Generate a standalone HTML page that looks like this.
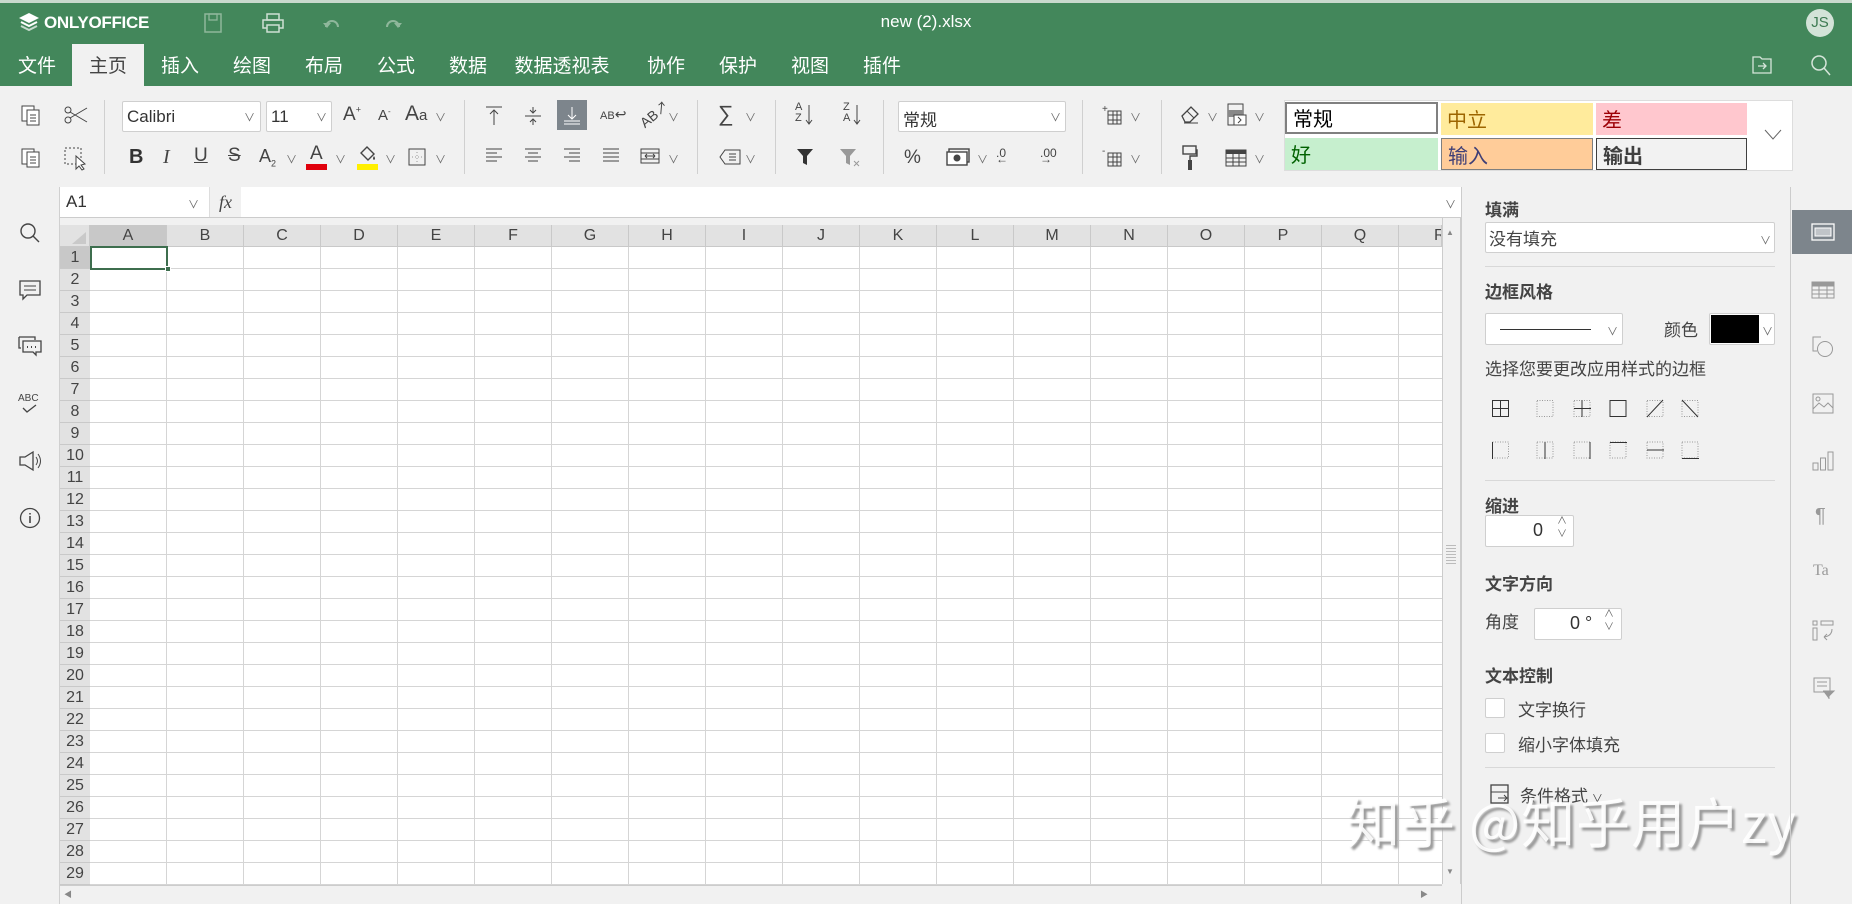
<!DOCTYPE html>
<html><head><meta charset="utf-8"><style>
*{margin:0;padding:0;box-sizing:border-box}
body{width:1852px;height:904px;overflow:hidden;background:#f1f1f1;font-family:"Liberation Sans","Noto Sans CJK SC",sans-serif;color:#444;position:relative}
.a{position:absolute}
.hdr{left:0;top:0;width:1852px;height:86px;background:#43875b;border-top:3px solid #c9d9cd}
.tab{position:absolute;top:44px;height:42px;line-height:42px;color:#fff;font-size:19px;font-family:"Noto Sans CJK SC",sans-serif;text-align:center;white-space:nowrap}
.ic{position:absolute;color:#444}
.sep{position:absolute;top:100px;width:1px;height:74px;background:#d0d0d0}
.box{position:absolute;background:#fff;border:1px solid #cfcfcf;border-radius:2px}
.dd{position:absolute;font-size:11px;color:#666}
.t{position:absolute;font-size:17px;color:#444;font-family:"Noto Sans CJK SC",sans-serif}
.b{font-weight:bold}
.ch{position:absolute;top:225px;height:22px;width:77px;line-height:22px;text-align:center;font-size:16px;color:#444;border-right:1px solid #c9c9c9;background:#e2e2e2;border-bottom:1px solid #c9c9c9}
.rh{position:absolute;left:60px;width:30px;height:22px;line-height:22px;text-align:center;font-size:16px;color:#444;background:#e2e2e2;border-bottom:1px solid #c9c9c9}
.st{position:absolute;height:32px;line-height:32px;padding-left:6px;font-size:20px;font-family:"Noto Sans CJK SC",sans-serif}
svg{position:absolute;overflow:visible}
</style></head><body>
<div class="a hdr"></div>
<svg style="left:18px;top:12px" width="22" height="22" viewBox="0 0 22 22"><path d="M11 1 L21 6 L11 11 L1 6Z" fill="#fff"/><path d="M3 10 L11 14 L19 10" stroke="#fff" stroke-width="2" fill="none"/><path d="M3 14 L11 18 L19 14" stroke="#fff" stroke-width="2" fill="none" opacity=".7"/></svg>
<div class="a" style="left:44px;top:13px;color:#fff;font-weight:bold;font-size:17px;letter-spacing:-.3px">ONLYOFFICE</div>
<svg style="left:204px;top:13px" width="18" height="20"><rect x="1" y="1" width="16" height="18" fill="none" stroke="#8fb79b" stroke-width="1.5"/><rect x="5" y="1" width="8" height="6" fill="none" stroke="#8fb79b" stroke-width="1.3"/></svg>
<svg style="left:262px;top:13px" width="22" height="20"><rect x="5" y="1" width="12" height="6" fill="none" stroke="#cfe0d4" stroke-width="1.5"/><rect x="1" y="7" width="20" height="8" fill="none" stroke="#cfe0d4" stroke-width="1.5"/><rect x="5" y="12" width="12" height="7" fill="#43875b" stroke="#cfe0d4" stroke-width="1.5"/></svg>
<svg style="left:323px;top:16px" width="18" height="14"><path d="M3 11 A6 6 0 1 1 15 11" stroke="#8fb79b" stroke-width="2" fill="none"/><path d="M0 7 L4 12 L8 7Z" fill="#8fb79b"/></svg>
<svg style="left:384px;top:16px" width="18" height="14"><path d="M3 11 A6 6 0 1 1 15 11" stroke="#8fb79b" stroke-width="2" fill="none"/><path d="M10 7 L14 12 L18 7Z" fill="#8fb79b"/></svg>
<div class="a" style="left:0;width:1852px;top:12px;text-align:center;color:#fff;font-size:17px">new (2).xlsx</div>
<div class="a" style="left:1806px;top:9px;width:28px;height:28px;border-radius:50%;background:#d3e3d8;color:#3d7a52;font-size:15px;text-align:center;line-height:28px">JS</div>
<div class="tab" style="left:14px;width:46px">文件</div>
<div class="tab" style="left:72px;width:72px;background:#f1f1f1;color:#444">主页</div>
<div class="tab" style="left:156px;width:48px">插入</div>
<div class="tab" style="left:228px;width:48px">绘图</div>
<div class="tab" style="left:300px;width:48px">布局</div>
<div class="tab" style="left:372px;width:48px">公式</div>
<div class="tab" style="left:444px;width:48px">数据</div>
<div class="tab" style="left:508px;width:108px">数据透视表</div>
<div class="tab" style="left:642px;width:48px">协作</div>
<div class="tab" style="left:714px;width:48px">保护</div>
<div class="tab" style="left:786px;width:48px">视图</div>
<div class="tab" style="left:858px;width:48px">插件</div>
<svg style="left:1752px;top:56px" width="20" height="18"><path d="M1 1 H8 L10 3 H19 V17 H1Z" fill="none" stroke="#d6e5da" stroke-width="1.3"/><path d="M6 10 H14 M11 7 L14 10 L11 13" stroke="#d6e5da" stroke-width="1.3" fill="none"/></svg>
<svg style="left:1811px;top:55px" width="20" height="22"><circle cx="8" cy="8" r="7" fill="none" stroke="#d6e5da" stroke-width="1.5"/><path d="M13 13 L19 20" stroke="#d6e5da" stroke-width="1.5"/></svg>

<svg style="left:21px;top:105px" width="20" height="22"><rect x="1" y="1" width="12" height="15" fill="#fff" stroke="#444"/><rect x="6" y="5" width="12" height="15" fill="#fff" stroke="#444"/><path d="M9 10h6M9 13h6M9 16h6" stroke="#444"/></svg>
<svg style="left:64px;top:106px" width="24" height="18"><circle cx="4" cy="4" r="3" fill="none" stroke="#444"/><circle cx="4" cy="14" r="3" fill="none" stroke="#444"/><path d="M6 6 L23 16 M6 12 L23 2" stroke="#444"/></svg>
<svg style="left:21px;top:146px" width="20" height="22"><rect x="1" y="3" width="12" height="15" fill="#fff" stroke="#444"/><rect x="6" y="6" width="12" height="15" fill="#fff" stroke="#444"/><path d="M9 11h6M9 14h6M9 17h6" stroke="#444"/></svg>
<svg style="left:64px;top:147px" width="24" height="24"><rect x="1" y="1" width="16" height="16" fill="none" stroke="#444" stroke-dasharray="2 2"/><path d="M12 9 L12 22 L15 19 L18 23 L20 22 L17 18 L21 17Z" fill="#fff" stroke="#444"/></svg>
<div class="sep" style="left:104px"></div>
<div class="box" style="left:122px;top:101px;width:139px;height:31px"></div>
<div class="a" style="left:127px;top:107px;font-size:17px;color:#333">Calibri</div>
<div class="dd" style="left:244px;top:109px">&#8744;</div>
<div class="box" style="left:266px;top:101px;width:66px;height:31px"></div>
<div class="a" style="left:271px;top:107px;font-size:17px;color:#333">11</div>
<div class="dd" style="left:316px;top:109px">&#8744;</div>
<div class="a" style="left:343px;top:104px;font-size:19px">A<sup style="font-size:9px">+</sup></div>
<div class="a" style="left:378px;top:107px;font-size:15px">A<sup style="font-size:8px">-</sup></div>
<div class="a" style="left:405px;top:102px;font-size:21px">A<span style="font-size:15px">a</span></div>
<div class="dd" style="left:435px;top:109px">&#8744;</div>
<div class="a b" style="left:129px;top:146px;font-size:20px;color:#333">B</div>
<div class="a" style="left:163px;top:146px;font-size:20px;font-style:italic;font-family:'Liberation Serif'">I</div>
<div class="a" style="left:194px;top:145px;font-size:19px;text-decoration:underline">U</div>
<div class="a" style="left:228px;top:145px;font-size:19px;text-decoration:line-through">S</div>
<div class="a" style="left:259px;top:146px;font-size:18px">A<sub style="font-size:9px">2</sub></div>
<div class="dd" style="left:286px;top:151px">&#8744;</div>
<div class="a" style="left:310px;top:143px;font-size:19px">A</div>
<div class="a" style="left:306px;top:164px;width:21px;height:6px;background:#e0000c"></div>
<div class="dd" style="left:335px;top:151px">&#8744;</div>
<svg style="left:358px;top:145px" width="20" height="18"><path d="M3 8 L9 2 L16 9 L10 15Z" fill="none" stroke="#444" stroke-width="1.4"/><path d="M16 11 Q18 14 16 15 Q14 14 16 11" fill="#444"/></svg>
<div class="a" style="left:357px;top:164px;width:21px;height:6px;background:#ffef00"></div>
<div class="dd" style="left:385px;top:151px">&#8744;</div>
<svg style="left:408px;top:148px" width="18" height="18"><rect x="1" y="1" width="16" height="16" fill="none" stroke="#444"/><path d="M9 1v16M1 9h16" stroke="#999" stroke-dasharray="1 2"/></svg>
<div class="dd" style="left:435px;top:151px">&#8744;</div>
<div class="sep" style="left:464px"></div>
<svg style="left:485px;top:106px" width="18" height="20"><path d="M1 1h16M9 4v15M5 8l4-4 4 4" stroke="#444" fill="none"/></svg>
<svg style="left:524px;top:106px" width="18" height="20"><path d="M1 10h16M9 1v6M9 13v6M6 4l3 3 3-3M6 16l3-3 3 3" stroke="#444" fill="none"/></svg>
<div class="a" style="left:557px;top:100px;width:30px;height:30px;background:#7d858c"></div>
<svg style="left:563px;top:106px" width="18" height="20"><path d="M1 18h16M1 15h16M9 1v12M5 9l4 4 4-4" stroke="#fff" fill="none"/></svg>
<div class="a" style="left:600px;top:106px;font-size:11px">AB<span style="font-size:14px">↩</span></div>
<div class="a" style="left:638px;top:104px;font-size:14px;transform:rotate(-40deg)">AB↗</div>
<div class="dd" style="left:668px;top:109px">&#8744;</div>
<svg style="left:485px;top:148px" width="18" height="16"><path d="M1 1h16M1 5h11M1 9h16M1 13h11" stroke="#444"/></svg>
<svg style="left:524px;top:148px" width="18" height="16"><path d="M1 1h16M4 5h10M1 9h16M4 13h10" stroke="#444"/></svg>
<svg style="left:563px;top:148px" width="18" height="16"><path d="M1 1h16M6 5h11M1 9h16M6 13h11" stroke="#444"/></svg>
<svg style="left:602px;top:148px" width="18" height="16"><path d="M1 1h16M1 5h16M1 9h16M1 13h16" stroke="#444"/></svg>
<svg style="left:640px;top:148px" width="20" height="16"><rect x="1" y="1" width="18" height="14" fill="none" stroke="#444"/><path d="M1 5h18M1 11h18M5 8h10M5 8l2-2M5 8l2 2M15 8l-2-2M15 8l-2 2" stroke="#444" fill="none"/></svg>
<div class="dd" style="left:668px;top:151px">&#8744;</div>
<div class="sep" style="left:697px"></div>
<div class="a" style="left:718px;top:101px;font-size:22px">∑</div>
<div class="dd" style="left:745px;top:109px">&#8744;</div>
<svg style="left:719px;top:149px" width="22" height="16"><path d="M6 1h15v14H6L1 8Z" fill="none" stroke="#444"/><path d="M10 5h7M10 8h7M10 11h7" stroke="#444"/></svg>
<div class="dd" style="left:745px;top:151px">&#8744;</div>
<div class="sep" style="left:775px"></div>
<div class="a" style="left:795px;top:102px;font-size:11px;line-height:11px">A<br>Z</div>
<svg style="left:805px;top:104px" width="8" height="22"><path d="M4 1v19M1 16l3 4 3-4" stroke="#444" fill="none"/></svg>
<div class="a" style="left:843px;top:102px;font-size:11px;line-height:11px">Z<br>A</div>
<svg style="left:853px;top:104px" width="8" height="22"><path d="M4 1v19M1 16l3 4 3-4" stroke="#444" fill="none"/></svg>
<svg style="left:797px;top:149px" width="16" height="16"><path d="M0 0h16L10 7v9L6 14V7Z" fill="#333"/></svg>
<svg style="left:840px;top:149px" width="20" height="18"><path d="M0 0h16L10 7v9L6 14V7Z" fill="#999"/><path d="M14 12l5 5M19 12l-5 5" stroke="#999"/></svg>
<div class="sep" style="left:883px"></div>
<div class="box" style="left:898px;top:101px;width:168px;height:31px"></div>
<div class="a" style="left:903px;top:106px;font-size:17px;font-family:'Noto Sans CJK SC';color:#333">常规</div>
<div class="dd" style="left:1050px;top:109px">&#8744;</div>
<div class="a" style="left:904px;top:147px;font-size:19px">%</div>
<svg style="left:946px;top:148px" width="24" height="18"><rect x="3" y="1" width="20" height="13" fill="none" stroke="#444" stroke-width="1.4"/><rect x="1" y="4" width="20" height="13" fill="#fff" stroke="#444" stroke-width="1.4"/><circle cx="11" cy="10" r="3.5" fill="#444"/></svg>
<div class="dd" style="left:977px;top:151px">&#8744;</div>
<div class="a" style="left:996px;top:146px;font-size:12px">.0<br><span style="position:relative;top:-8px">←</span></div>
<div class="a" style="left:1040px;top:146px;font-size:12px">.00<br><span style="position:relative;top:-8px">→</span></div>
<div class="sep" style="left:1082px"></div>
<svg style="left:1102px;top:104px" width="22" height="22"><text x="0" y="8" font-size="10" fill="#444">+</text><rect x="6" y="7" width="13" height="13" fill="none" stroke="#444"/><path d="M6 11h13M6 16h13M11 7v13M15 7v13" stroke="#444"/></svg>
<div class="dd" style="left:1130px;top:109px">&#8744;</div>
<svg style="left:1102px;top:146px" width="22" height="22"><text x="0" y="8" font-size="10" fill="#444">-</text><rect x="6" y="7" width="13" height="13" fill="none" stroke="#444"/><path d="M6 11h13M6 16h13M11 7v13M15 7v13" stroke="#444"/></svg>
<div class="dd" style="left:1130px;top:151px">&#8744;</div>
<div class="sep" style="left:1161px"></div>
<svg style="left:1180px;top:104px" width="20" height="20"><path d="M2 12 L11 3 L18 10 L10 18 H5Z" fill="none" stroke="#444" stroke-width="1.3"/><path d="M7 7l7 7M4 19h14" stroke="#444"/></svg>
<div class="dd" style="left:1207px;top:109px">&#8744;</div>
<svg style="left:1227px;top:103px" width="20" height="24"><rect x="1" y="1" width="15" height="21" fill="none" stroke="#444"/><rect x="1" y="7" width="15" height="7" fill="#888"/><rect x="7" y="12" width="12" height="10" fill="#fff" stroke="#444"/><path d="M11 14l3 3-3 3" stroke="#444" fill="none"/></svg>
<div class="dd" style="left:1254px;top:109px">&#8744;</div>
<svg style="left:1182px;top:145px" width="16" height="26"><rect x="1" y="1" width="13" height="8" fill="none" stroke="#444" stroke-width="1.4"/><path d="M14 5h1v6H8v14" stroke="#444" stroke-width="1.4" fill="none"/><rect x="6" y="15" width="4" height="10" fill="#444"/></svg>
<svg style="left:1225px;top:149px" width="22" height="18"><rect x="1" y="1" width="20" height="16" fill="none" stroke="#444"/><rect x="1" y="1" width="20" height="4" fill="#444"/><path d="M1 9h20M1 13h20M8 5v12M14 5v12" stroke="#444"/></svg>
<div class="dd" style="left:1254px;top:151px">&#8744;</div>
<div class="a" style="left:1284px;top:100px;width:509px;height:71px;background:#fff;border:1px solid #ddd"></div>
<div class="st" style="left:1285px;top:102px;width:153px;border:2px solid #808080;background:#fff;color:#000;line-height:28px">常规</div>
<div class="st" style="left:1441px;top:103px;width:152px;background:#ffeb9c;color:#9c6500">中立</div>
<div class="st" style="left:1596px;top:103px;width:151px;background:#ffc7ce;color:#9c0006">差</div>
<div class="st" style="left:1285px;top:138px;width:153px;background:#c6efce;color:#006100">好</div>
<div class="st" style="left:1441px;top:138px;width:152px;background:#ffcc99;color:#3f3f76;border:1px solid #7f7f7f">输入</div>
<div class="st" style="left:1596px;top:138px;width:151px;background:#f2f2f2;color:#3f3f3f;border:1px solid #3f3f3f;font-weight:bold">输出</div>
<svg style="left:1764px;top:129px" width="18" height="12"><path d="M1 1l8 9 8-9" stroke="#666" fill="none"/></svg>

<div class="a" style="left:59px;top:187px;width:1px;height:717px;background:#d0d0d0"></div>
<svg style="left:19px;top:222px" width="22" height="22"><circle cx="9" cy="9" r="7" fill="none" stroke="#444" stroke-width="1.4"/><path d="M14 14l6 6" stroke="#444" stroke-width="1.4"/></svg>
<svg style="left:19px;top:280px" width="22" height="22"><path d="M1 1h20v14H8l-4 4v-4H1Z" fill="none" stroke="#444" stroke-width="1.3"/><path d="M5 6h12M5 10h12" stroke="#444"/></svg>
<svg style="left:18px;top:336px" width="24" height="20"><path d="M1 1h16v3" fill="none" stroke="#444" stroke-width="1.3"/><path d="M1 1v11h2" stroke="#444" fill="none" stroke-width="1.3"/><path d="M5 5h18v11h-5v3l-3-3H5Z" fill="none" stroke="#444" stroke-width="1.3"/><path d="M9 11h1M13 11h1M17 11h1" stroke="#444" stroke-width="2"/></svg>
<div class="a" style="left:18px;top:393px;font-size:10px">ABC</div>
<svg style="left:22px;top:404px" width="16" height="10"><path d="M1 4l4 4 9-7" stroke="#444" fill="none" stroke-width="1.3"/></svg>
<svg style="left:18px;top:450px" width="24" height="22"><path d="M2 7h5l8-5v18l-8-5H2Z" fill="none" stroke="#444" stroke-width="1.3"/><path d="M18 7q3 4 0 8M20 4q5 7 0 14" stroke="#444" fill="none"/></svg>
<svg style="left:19px;top:507px" width="22" height="22"><circle cx="11" cy="11" r="9.5" fill="none" stroke="#444" stroke-width="1.3"/><path d="M11 9v7M11 6v1.5" stroke="#444" stroke-width="1.6"/></svg>

<div class="a" style="left:60px;top:187px;width:1401px;height:31px;background:#fff;border-bottom:1px solid #ccc"></div>
<div class="a" style="left:66px;top:192px;font-size:17px;color:#333">A1</div>
<div class="dd" style="left:188px;top:196px">&#8744;</div>
<div class="a" style="left:209px;top:187px;width:32px;height:30px;background:#f1f1f1;border-left:1px solid #ddd;text-align:center;font-family:'Liberation Serif';font-style:italic;font-size:18px;line-height:30px">fx</div>
<div class="dd" style="left:1445px;top:196px">&#8744;</div>
<div class="a" style="left:60px;top:218px;width:1382px;height:7px;background:#f1f1f1"></div>

<div class="a" style="left:90px;top:247px;width:1352px;height:638px;background-color:#fff;background-image:repeating-linear-gradient(to right,transparent 0 76px,#d5d5d5 76px 77px),repeating-linear-gradient(to bottom,transparent 0 21px,#d5d5d5 21px 22px)"></div>
<div class="a" style="left:60px;top:225px;width:30px;height:22px;background:#e2e2e2;border-right:1px solid #c9c9c9;border-bottom:1px solid #c9c9c9"></div>
<svg style="left:72px;top:232px" width="14" height="12"><path d="M14 0V12H0Z" fill="#c9c9c9"/></svg>
<div class="ch" style="left:90px;background:#c8c8c8">A</div><div class="ch" style="left:167px">B</div><div class="ch" style="left:244px">C</div><div class="ch" style="left:321px">D</div><div class="ch" style="left:398px">E</div><div class="ch" style="left:475px">F</div><div class="ch" style="left:552px">G</div><div class="ch" style="left:629px">H</div><div class="ch" style="left:706px">I</div><div class="ch" style="left:783px">J</div><div class="ch" style="left:860px">K</div><div class="ch" style="left:937px">L</div><div class="ch" style="left:1014px">M</div><div class="ch" style="left:1091px">N</div><div class="ch" style="left:1168px">O</div><div class="ch" style="left:1245px">P</div><div class="ch" style="left:1322px">Q</div><div class="ch" style="left:1399px;width:43px;text-align:left;padding-left:35px;overflow:hidden">R</div>
<div class="rh" style="top:247px;background:#c8c8c8">1</div><div class="rh" style="top:269px">2</div><div class="rh" style="top:291px">3</div><div class="rh" style="top:313px">4</div><div class="rh" style="top:335px">5</div><div class="rh" style="top:357px">6</div><div class="rh" style="top:379px">7</div><div class="rh" style="top:401px">8</div><div class="rh" style="top:423px">9</div><div class="rh" style="top:445px">10</div><div class="rh" style="top:467px">11</div><div class="rh" style="top:489px">12</div><div class="rh" style="top:511px">13</div><div class="rh" style="top:533px">14</div><div class="rh" style="top:555px">15</div><div class="rh" style="top:577px">16</div><div class="rh" style="top:599px">17</div><div class="rh" style="top:621px">18</div><div class="rh" style="top:643px">19</div><div class="rh" style="top:665px">20</div><div class="rh" style="top:687px">21</div><div class="rh" style="top:709px">22</div><div class="rh" style="top:731px">23</div><div class="rh" style="top:753px">24</div><div class="rh" style="top:775px">25</div><div class="rh" style="top:797px">26</div><div class="rh" style="top:819px">27</div><div class="rh" style="top:841px">28</div><div class="rh" style="top:863px">29</div>
<div class="a" style="left:90px;top:246px;width:78px;height:24px;border:2px solid #3d6e4e"></div>
<div class="a" style="left:165px;top:266px;width:6px;height:6px;background:#3d6e4e;border:1px solid #fff"></div>
<div class="a" style="left:1442px;top:218px;width:19px;height:666px;background:#f1f1f1;border-left:1px solid #ccc;border-right:1px solid #ccc"></div>
<div class="a" style="left:1446px;top:228px;font-size:8px;color:#888">▲</div>
<div class="a" style="left:1446px;top:867px;font-size:8px;color:#888">▼</div>
<div class="a" style="left:1446px;top:545px;width:10px;height:20px;background-image:repeating-linear-gradient(to bottom,#bbb 0 1px,transparent 1px 3px)"></div>
<div class="a" style="left:60px;top:885px;width:1382px;height:19px;background:#f1f1f1;border-top:1px solid #ccc"></div>
<div class="a" style="left:64px;top:889px;font-size:8px;color:#888">◀</div>
<div class="a" style="left:1420px;top:889px;font-size:8px;color:#888">▶</div>

<div class="a" style="left:1461px;top:187px;width:1px;height:717px;background:#ccc"></div>
<div class="t b" style="left:1485px;top:196px">填满</div>
<div class="box" style="left:1485px;top:222px;width:290px;height:31px"></div>
<div class="t" style="left:1489px;top:225px">没有填充</div>
<div class="dd" style="left:1760px;top:232px">&#8744;</div>
<div class="a" style="left:1485px;top:266px;width:290px;height:1px;background:#d8d8d8"></div>
<div class="t b" style="left:1485px;top:278px">边框风格</div>
<div class="box" style="left:1485px;top:313px;width:138px;height:32px"></div>
<div class="a" style="left:1500px;top:329px;width:91px;height:1px;background:#333"></div>
<div class="dd" style="left:1607px;top:323px">&#8744;</div>
<div class="t" style="left:1664px;top:316px">颜色</div>
<div class="box" style="left:1709px;top:313px;width:66px;height:32px"></div>
<div class="a" style="left:1711px;top:315px;width:48px;height:28px;background:#000"></div>
<div class="dd" style="left:1762px;top:323px">&#8744;</div>
<div class="t" style="left:1485px;top:355px">选择您要更改应用样式的边框</div>
<svg style="left:1492px;top:400px" width="200" height="62" fill="none">
<g stroke="#999" stroke-dasharray="1 1.5">
<rect x="45" y="0.5" width="16" height="16"/><rect x="82" y="0.5" width="16" height="16"/><rect x="118" y="0.5" width="16" height="16"/><rect x="155" y="0.5" width="16" height="16"/><rect x="190" y="0.5" width="16" height="16"/>
<rect x="0.5" y="42" width="16" height="16"/><rect x="45" y="42" width="16" height="16"/><rect x="82" y="42" width="16" height="16"/><rect x="118" y="42" width="16" height="16"/><rect x="155" y="42" width="16" height="16"/><rect x="190" y="42" width="16" height="16"/>
</g>
<g stroke="#333">
<rect x="0.5" y="0.5" width="16" height="16"/><path d="M8.5 0v17M0 8.5h17"/>
<path d="M90 0v17M82 8.5h17"/>
<rect x="118" y="0.5" width="16" height="16"/>
<path d="M155 17L171 0"/><path d="M190 0L206 17"/>
<path d="M0.5 42v17M53 42v17M98 42v17M118 42.5h17M155 50h17M190 58.5h17"/>
</g></svg>
<div class="a" style="left:1485px;top:480px;width:290px;height:1px;background:#d8d8d8"></div>
<div class="t b" style="left:1485px;top:492px">缩进</div>
<div class="box" style="left:1485px;top:515px;width:89px;height:32px"></div>
<div class="a" style="left:1533px;top:520px;font-size:18px;color:#333">0</div>
<div class="dd" style="left:1557px;top:515px;font-size:10px;line-height:13px">&#8743;<br>&#8744;</div>
<div class="t b" style="left:1485px;top:570px">文字方向</div>
<div class="t" style="left:1485px;top:608px">角度</div>
<div class="box" style="left:1534px;top:608px;width:88px;height:32px"></div>
<div class="a" style="left:1570px;top:613px;font-size:18px;color:#333">0 °</div>
<div class="dd" style="left:1604px;top:608px;font-size:10px;line-height:13px">&#8743;<br>&#8744;</div>
<div class="t b" style="left:1485px;top:662px">文本控制</div>
<div class="box" style="left:1485px;top:698px;width:20px;height:20px"></div>
<div class="t" style="left:1518px;top:696px">文字换行</div>
<div class="box" style="left:1485px;top:733px;width:20px;height:20px"></div>
<div class="t" style="left:1518px;top:731px">缩小字体填充</div>
<div class="a" style="left:1485px;top:767px;width:290px;height:1px;background:#d8d8d8"></div>
<svg style="left:1490px;top:784px" width="22" height="22"><rect x="1" y="1" width="17" height="18" fill="none" stroke="#444" stroke-width="1.3"/><path d="M1 8h17" stroke="#444"/><path d="M8 14h10M14 11l3 3-3 3" stroke="#444" fill="none"/></svg>
<div class="t" style="left:1520px;top:782px">条件格式 <span style="font-size:11px">&#8744;</span></div>
<div class="a" style="left:1346px;top:780px;font-size:54px;font-family:'Noto Sans CJK SC',sans-serif;color:rgba(255,255,255,.9);text-shadow:3px 3px 2px #9a9a9a;white-space:nowrap;letter-spacing:1px">知乎 @知乎用户zy</div>

<div class="a" style="left:1790px;top:187px;width:1px;height:717px;background:#ccc"></div>
<div class="a" style="left:1792px;top:210px;width:60px;height:44px;background:#7d858c"></div>
<svg style="left:1811px;top:223px" width="24" height="18"><rect x="1" y="1" width="22" height="16" fill="none" stroke="#fff" stroke-width="1.3"/><rect x="4" y="5" width="16" height="8" fill="#c0c4c8" stroke="#fff"/></svg>
<svg style="left:1811px;top:281px" width="24" height="18" stroke="#999" fill="none"><rect x="1" y="1" width="22" height="16"/><rect x="1" y="1" width="22" height="4" fill="#999"/><path d="M1 9h22M1 13h22M8 5v12M16 5v12"/></svg>
<svg style="left:1812px;top:336px" width="22" height="22" stroke="#999" fill="none"><path d="M9 1H1v14h4"/><circle cx="13" cy="13" r="7.5"/></svg>
<svg style="left:1812px;top:393px" width="22" height="22" stroke="#999" fill="none"><rect x="1" y="1" width="20" height="19"/><circle cx="6" cy="6" r="2"/><path d="M1 16l6-6 5 4 4-4 5 5"/></svg>
<svg style="left:1812px;top:450px" width="22" height="22" stroke="#999" fill="none"><rect x="1" y="13" width="5" height="7"/><rect x="8.5" y="8" width="5" height="12"/><rect x="16" y="2" width="5" height="18"/></svg>
<div class="a" style="left:1815px;top:505px;font-size:20px;color:#999">¶</div>
<div class="a" style="left:1813px;top:562px;font-size:16px;color:#999;font-family:'Liberation Serif'">Ta</div>
<svg style="left:1812px;top:620px" width="22" height="22" stroke="#999" fill="none"><rect x="1" y="1" width="4" height="4"/><rect x="1" y="8" width="4" height="12"/><rect x="9" y="1" width="12" height="4"/><path d="M20 9q0 7-8 8M12 17l3-3M12 17l3 3"/></svg>
<svg style="left:1813px;top:677px" width="22" height="22" stroke="#999" fill="none"><path d="M1 1h16v14H1ZM4 5h10M4 9h10"/><path d="M10 14h11l-5 5v3" fill="#999"/></svg>
</body></html>
